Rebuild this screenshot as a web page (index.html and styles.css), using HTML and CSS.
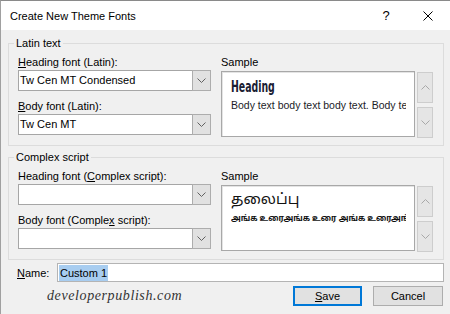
FILE: index.html
```html
<!DOCTYPE html>
<html>
<head>
<meta charset="utf-8">
<link rel="stylesheet" href="styles.css">
</head>
<body>
<div class="window">
  <div class="titlebar">
    <span class="title">Create New Theme Fonts</span>
    <span class="help">?</span>
    <span class="close"><svg width="10" height="10" viewBox="0 0 10 10"><path d="M0.5 0.5L9.5 9.5M9.5 0.5L0.5 9.5" stroke="#000" stroke-width="1" fill="none"/></svg></span>
  </div>
  <div class="content">
    <fieldset class="group">
      <legend>Latin text</legend>
      <div class="grid">
        <div class="col">
          <label class="lbl"><u>H</u>eading font (Latin):</label>
          <div class="combo"><span class="combo-text">Tw Cen MT Condensed</span><span class="combo-btn"><svg width="9" height="5" viewBox="0 0 9 5"><path d="M0.5 0.5L4.5 4.5L8.5 0.5" stroke="#606060" fill="none"/></svg></span></div>
          <label class="lbl second"><u>B</u>ody font (Latin):</label>
          <div class="combo"><span class="combo-text">Tw Cen MT</span><span class="combo-btn"><svg width="9" height="5" viewBox="0 0 9 5"><path d="M0.5 0.5L4.5 4.5L8.5 0.5" stroke="#606060" fill="none"/></svg></span></div>
        </div>
        <div class="col">
          <div class="lbl">Sample</div>
          <div class="sample-row">
            <div class="sample">
              <div class="s-head"><span class="cond">Heading</span></div>
              <div class="s-body">Body text body text body text. Body text body text.</div>
            </div>
            <div class="scroll">
              <div class="sbtn"><svg width="9" height="5" viewBox="0 0 9 5"><path d="M0.5 4.5L4.5 0.5L8.5 4.5" stroke="#a8a8a8" fill="none"/></svg></div>
              <div class="sbtn"><svg width="9" height="5" viewBox="0 0 9 5"><path d="M0.5 0.5L4.5 4.5L8.5 0.5" stroke="#a8a8a8" fill="none"/></svg></div>
            </div>
          </div>
        </div>
      </div>
    </fieldset>
    <fieldset class="group group2">
      <legend>Complex script</legend>
      <div class="grid">
        <div class="col">
          <label class="lbl">Heading font (<u>C</u>omplex script):</label>
          <div class="combo"><span class="combo-text"></span><span class="combo-btn"><svg width="9" height="5" viewBox="0 0 9 5"><path d="M0.5 0.5L4.5 4.5L8.5 0.5" stroke="#606060" fill="none"/></svg></span></div>
          <label class="lbl second">Body font (Comple<u>x</u> script):</label>
          <div class="combo"><span class="combo-text"></span><span class="combo-btn"><svg width="9" height="5" viewBox="0 0 9 5"><path d="M0.5 0.5L4.5 4.5L8.5 0.5" stroke="#606060" fill="none"/></svg></span></div>
        </div>
        <div class="col">
          <div class="lbl">Sample</div>
          <div class="sample-row">
            <div class="sample">
              <div class="t-head">தலைப்பு</div>
              <div class="t-body">அங்க உரைஅங்க உரை அங்க உரைஅங்க உரை</div>
            </div>
            <div class="scroll">
              <div class="sbtn"><svg width="9" height="5" viewBox="0 0 9 5"><path d="M0.5 4.5L4.5 0.5L8.5 4.5" stroke="#a8a8a8" fill="none"/></svg></div>
              <div class="sbtn"><svg width="9" height="5" viewBox="0 0 9 5"><path d="M0.5 0.5L4.5 4.5L8.5 0.5" stroke="#a8a8a8" fill="none"/></svg></div>
            </div>
          </div>
        </div>
      </div>
    </fieldset>
    <div class="name-row">
      <label class="name-label"><u>N</u>ame:</label>
      <div class="name-input"><span class="sel">Custom 1</span></div>
    </div>
    <div class="footer">
      <span class="watermark">developerpublish.com</span>
      <button class="btn default"><u>S</u>ave</button>
      <button class="btn cancel">Cancel</button>
    </div>
  </div>
</div>
</body>
</html>
```
FILE: styles.css
```css
html, body {
  margin: 0;
  padding: 0;
}
body {
  font-family: "Liberation Sans", Arial, sans-serif;
  font-size: 11px;
  color: #000;
  background: #f0f0f0;
}
.window {
  width: 450px;
  height: 314px;
  box-sizing: border-box;
  border-left: 1px solid #a0a0a0;
  border-top: 1px solid #8a8a8a;
  background: #f0f0f0;
  display: flex;
  flex-direction: column;
  overflow: hidden;
}
.titlebar {
  height: 29px;
  flex: none;
  background: #fff;
  display: flex;
  align-items: center;
}
.title {
  margin-left: 9px;
  line-height: 16px;
}
.help {
  margin-left: auto;
  width: 40px;
  text-align: center;
  font-size: 13px;
  line-height: 16px;
}
.close {
  width: 44px;
  display: flex;
  justify-content: center;
  align-items: center;
}
.close svg { display: block; }
.content {
  padding: 0 6px 0 7px;
}
.group {
  margin: 5px 0 0;
  padding: 3px 9px 10px 9px;
  border: 1px solid #dcdcdc;
  min-width: 0;
}
.group2 {
  margin-top: 3px;
}
.group legend {
  margin-left: -4px;
  padding: 0 2px;
  line-height: 16px;
}
.grid {
  display: grid;
  grid-template-columns: 193px 1fr;
  column-gap: 10px;
}
.lbl {
  display: block;
  height: 16px;
  line-height: 16px;
  white-space: nowrap;
}
.lbl.second {
  margin-top: 7px;
}
.combo {
  height: 21px;
  box-sizing: border-box;
  border: 1px solid #a6a6a6;
  background: #fff;
  display: flex;
}
.combo-text {
  flex: 1;
  padding-left: 1px;
  line-height: 19px;
  white-space: nowrap;
  overflow: hidden;
}
.combo-btn {
  width: 19px;
  margin: -1px -1px -1px 0;
  box-sizing: border-box;
  border: 1px solid #adadad;
  background: #e1e1e1;
  display: flex;
  align-items: center;
  justify-content: center;
}
.combo-btn svg, .sbtn svg { display: block; }
.sample-row {
  display: flex;
  align-items: flex-start;
  gap: 2px;
  height: 66px;
  margin-top: 1px;
  margin-bottom: -2px;
}
.sample {
  width: 194px;
  height: 66px;
  box-sizing: border-box;
  border: 1px solid #a8a8a8;
  box-shadow: inset 1px 1px 0 #e4e4e4;
  background: #fff;
  padding: 4px 8px 0 9px;
  overflow: hidden;
  white-space: nowrap;
}
.s-head {
  height: 22px;
  line-height: 22px;
  color: #1a2033;
}
.cond {
  display: inline-block;
  font-family: "DejaVu Sans Condensed", "DejaVu Sans", sans-serif;
  font-weight: bold;
  font-size: 16px;
  transform: scaleX(0.65);
  transform-origin: left center;
}
.s-body {
  font-size: 10.5px;
  line-height: 14px;
  color: #1c1c28;
  overflow: hidden;
}
.t-head {
  font-family: "Noto Sans Tamil", "Lohit Tamil", "Noto Sans", sans-serif;
  font-size: 15px;
  line-height: 22px;
  color: #111;
}
.t-body {
  font-family: "Noto Sans Tamil", "Lohit Tamil", "Noto Sans", sans-serif;
  font-size: 8px;
  font-weight: bold;
  line-height: 14px;
  color: #111;
  overflow: hidden;
}
.scroll {
  display: flex;
  flex-direction: column;
  gap: 4px;
  margin-top: 1px;
}
.sbtn {
  width: 16px;
  height: 31px;
  box-sizing: border-box;
  border: 1px solid #cdcdcd;
  background: #e5e5e5;
  display: flex;
  align-items: center;
  justify-content: center;
}
.name-row {
  display: flex;
  align-items: center;
  margin-top: 3px;
  padding-left: 9px;
}
.name-label {
  width: 40px;
  line-height: 16px;
}
.name-input {
  flex: 1;
  height: 19px;
  box-sizing: border-box;
  border: 1px solid #b4b4b4;
  background: #fff;
  padding: 1px 0 0 1px;
}
.sel {
  display: inline-block;
  background: #a8cdf0;
  line-height: 16px;
  padding: 0 1px;
}
.footer {
  display: flex;
  align-items: center;
  margin-top: 4px;
  height: 20px;
}
.watermark {
  margin-left: 39px;
  font-family: "Liberation Serif", serif;
  font-style: italic;
  font-size: 14px;
  letter-spacing: 0.6px;
  color: #333;
  line-height: 20px;
}
.btn {
  height: 20px;
  box-sizing: border-box;
  background: #e1e1e1;
  border: 1px solid #adadad;
  font-family: "Liberation Sans", Arial, sans-serif;
  font-size: 11px;
  color: #000;
  padding: 0;
  line-height: 16px;
}
.default {
  margin-left: auto;
  width: 69px;
  border-color: #0078d7;
  box-shadow: inset 0 0 0 1px #0078d7;
}
.cancel {
  width: 70px;
  margin-left: 11px;
  margin-right: 1px;
}
```
